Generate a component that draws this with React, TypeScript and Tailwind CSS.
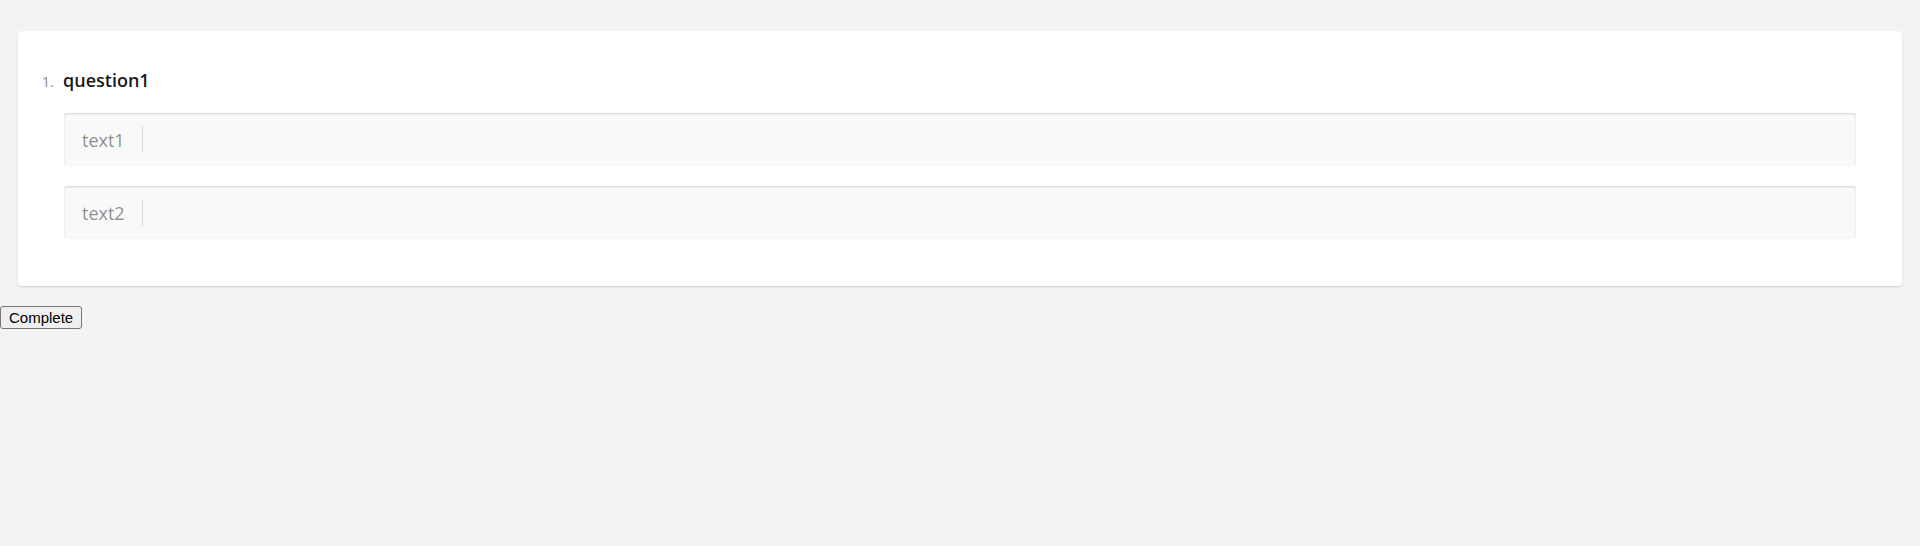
import { useState } from "react";

const ITEMS = [
  { id: "text1", label: "text1" },
  { id: "text2", label: "text2" },
];

export default function App() {
  const [values, setValues] = useState<Record<string, string>>({});

  return (
    <div
      className="min-h-screen bg-[#f3f3f3] pt-[31px]"
      style={{ fontFamily: '"Open Sans", "Noto Sans", sans-serif' }}
    >
      {/* Survey page */}
      <div className="mx-[18px] rounded-[4px] bg-white pt-[37px] pb-[47px] shadow-[0_1px_2px_rgba(0,0,0,0.15)]">
        {/* Question title */}
        <div className="flex h-[25px] items-baseline pl-[24px]">
          <span className="w-[21px] shrink-0 text-[14px] leading-[20px] text-[rgba(0,0,0,0.5)]">1.</span>
          <span className="text-[18px] leading-[24px] font-semibold text-[rgba(0,0,0,0.91)]">question1</span>
        </div>

        {/* Multiple text items */}
        <div className="mx-[46px] mt-[20px] flex flex-col gap-[20px]">
          {ITEMS.map((item) => (
            <label
              key={item.id}
              className="flex h-[53px] items-center rounded-[3px] bg-[#f9f9f9] shadow-[inset_0_1px_2px_rgba(0,0,0,0.15)]"
            >
              <span className="pt-[2px] pl-[18px] pr-[17px] text-[18px] text-[rgba(0,0,0,0.45)]">{item.label}</span>
              <span className="h-[27px] w-px bg-[rgba(0,0,0,0.12)]" />
              <input
                className="h-full flex-1 bg-transparent px-[16px] text-[18px] outline-none"
                value={values[item.id] || ""}
                onChange={(e) => setValues((prev) => ({ ...prev, [item.id]: e.target.value }))}
              />
            </label>
          ))}
        </div>
      </div>

      <button
        className="mt-[20px] rounded-[3px] border border-[#767676] bg-[#efefef] px-[8px] py-[2px] text-[15px] leading-[17px] text-black"
        style={{ fontFamily: '"Liberation Sans", Arial, sans-serif' }}
      >
        Complete
      </button>
    </div>
  );
}
